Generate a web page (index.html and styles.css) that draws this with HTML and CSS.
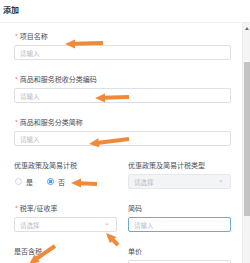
FILE: index.html
```html
<!DOCTYPE html>
<html lang="zh-CN">
<head>
    <meta charset="UTF-8">
    <meta name="viewport" content="width=device-width, initial-scale=1.0">
    <title>添加</title>
    <link rel="stylesheet" href="styles.css">
</head>
<body>
    <div class="dialog">
        <div class="dialog-header">添加</div>
        <div class="dialog-body">
            <form class="form">
                <div class="form-item wide">
                    <label class="form-label"><span class="req">*</span>项目名称</label>
                    <input class="input" placeholder="请输入">
                </div>
                <div class="form-item wide">
                    <label class="form-label"><span class="req">*</span>商品和服务税收分类编码</label>
                    <input class="input" placeholder="请输入">
                </div>
                <div class="form-item wide">
                    <label class="form-label"><span class="req">*</span>商品和服务分类简称</label>
                    <input class="input" placeholder="请输入">
                </div>

                <div class="form-item">
                    <label class="form-label">优惠政策及简易计税</label>
                    <div class="radio-group">
                        <span class="radio"><span class="radio-dot"></span>是</span>
                        <span class="radio checked"><span class="radio-dot"></span>否</span>
                    </div>
                </div>
                <div class="form-item">
                    <label class="form-label">优惠政策及简易计税类型</label>
                    <div class="select disabled"><span>请选择</span><span class="chevron">&#8964;</span></div>
                </div>

                <div class="form-item">
                    <label class="form-label"><span class="req">*</span>税率/征收率</label>
                    <div class="select"><span>请选择</span><span class="chevron">&#8964;</span></div>
                </div>
                <div class="form-item">
                    <label class="form-label">简码</label>
                    <input class="input focused" placeholder="请输入">
                </div>

                <div class="form-item">
                    <label class="form-label">是否含税</label>
                    <div class="radio-group">
                        <span class="radio checked"><span class="radio-dot"></span></span>
                        <span class="radio"><span class="radio-dot"></span></span>
                    </div>
                </div>
                <div class="form-item">
                    <label class="form-label">单价</label>
                    <input class="input" placeholder="请输入">
                </div>
            </form>
            <div class="scrollbar">
                <div class="scroll-up"></div>
                <div class="scroll-thumb"></div>
            </div>
        </div>

        <!-- annotation arrows drawn over the form -->
        <svg class="arrows" width="250" height="263" viewBox="0 0 250 263">
            <g fill="#ef8a3b" stroke="#ef8a3b">
                <line x1="73" y1="43.8" x2="103" y2="43" stroke-width="4"/>
                <polygon points="65,44 75,39.5 75,48.5" stroke="none"/>

                <line x1="103" y1="97.8" x2="129" y2="97" stroke-width="4"/>
                <polygon points="95,98 105,93.5 105,102.5" stroke="none"/>

                <line x1="97" y1="143" x2="129" y2="139" stroke-width="4"/>
                <polygon points="89,144 99.5,147.3 98.3,138.3" stroke="none"/>

                <line x1="79" y1="183.3" x2="97" y2="184" stroke-width="4"/>
                <polygon points="71,183 81,178.5 81,187.5" stroke="none"/>

                <line x1="111.7" y1="238.7" x2="118" y2="245" stroke-width="4"/>
                <polygon points="106,233 109.9,243.3 116.3,236.9" stroke="none"/>

                <line x1="36" y1="259" x2="55" y2="246" stroke-width="4"/>
                <polygon points="29,264 39.8,262 34.7,254.6" stroke="none"/>
            </g>
        </svg>
    </div>
</body>
</html>
```

FILE: styles.css
```css
* {
    margin: 0;
    padding: 0;
    box-sizing: border-box;
}

body {
    font-family: "Noto Sans CJK SC", "Noto Sans", sans-serif;
    background: #fff;
    color: #4a4c51;
    width: 250px;
    height: 263px;
    overflow: hidden;
}

.dialog {
    position: relative;
    width: 250px;
    height: 263px;
    display: flex;
    flex-direction: column;
}

.dialog-header {
    height: 23px;
    padding-left: 3px;
    line-height: 19px;
    font-size: 8px;
    font-weight: 700;
    color: #303133;
    border-bottom: 1px solid #ebeef5;
}

.dialog-body {
    flex: 1;
    display: flex;
    overflow: hidden;
}

.form {
    flex: 1;
    padding: 8px 11px 0 14px;
    display: grid;
    grid-template-columns: 1fr 1fr;
    column-gap: 11px;
    align-content: start;
}

.form-item {
    height: 43px;
}

.form-item.wide {
    grid-column: span 2;
}

.form-label {
    display: block;
    height: 10px;
    line-height: 10px;
    margin-bottom: 4px;
    font-size: 7px;
    color: #4a4c51;
    white-space: nowrap;
}

.req {
    color: #f56c6c;
    font-size: 6px;
    margin-right: 2px;
    margin-left: 1px;
}

.input {
    display: block;
    width: 100%;
    height: 15px;
    border: 1px solid #dcdfe6;
    border-radius: 2px;
    padding: 0 5px;
    font-family: inherit;
    font-size: 6.5px;
    color: #606266;
    outline: none;
    background: #fff;
}

.input::placeholder {
    color: #b8bcc4;
}

.input.focused {
    border-color: #6aaec4;
}

.select {
    height: 15px;
    border: 1px solid #dcdfe6;
    border-radius: 2px;
    padding: 0 5px;
    display: flex;
    align-items: center;
    justify-content: space-between;
    font-size: 6.5px;
    color: #b8bcc4;
}

.select.disabled {
    background: #f3f4f6;
    border-color: #e4e7ed;
}

.chevron {
    font-size: 7px;
    line-height: 1;
    margin-top: -4px;
    margin-right: 1px;
    color: #b0b4bb;
}

.radio-group {
    height: 15px;
    display: flex;
    align-items: center;
    gap: 14px;
    padding-left: 1px;
}

.radio {
    display: flex;
    align-items: center;
    gap: 4px;
    font-size: 7px;
    color: #4a4c51;
}

.radio-dot {
    width: 7px;
    height: 7px;
    border-radius: 50%;
    border: 1px solid #d3d6dc;
    background: #fff;
}

.radio.checked .radio-dot {
    border-color: #409eff;
    background: radial-gradient(circle, #409eff 0 1.6px, #fff 2px);
}

.scrollbar {
    width: 8px;
    background: #f4f4f4;
    border-left: 1px solid #ececec;
    display: flex;
    flex-direction: column;
    align-items: center;
}

.scroll-up {
    margin-top: 4px;
    width: 0;
    height: 0;
    border-left: 2px solid transparent;
    border-right: 2px solid transparent;
    border-bottom: 3px solid #6b6b6b;
}

.scroll-thumb {
    margin-top: 32px;
    width: 6px;
    height: 154px;
    background: #c3c3c3;
}

.arrows {
    position: absolute;
    top: 0;
    left: 0;
    pointer-events: none;
}
```
